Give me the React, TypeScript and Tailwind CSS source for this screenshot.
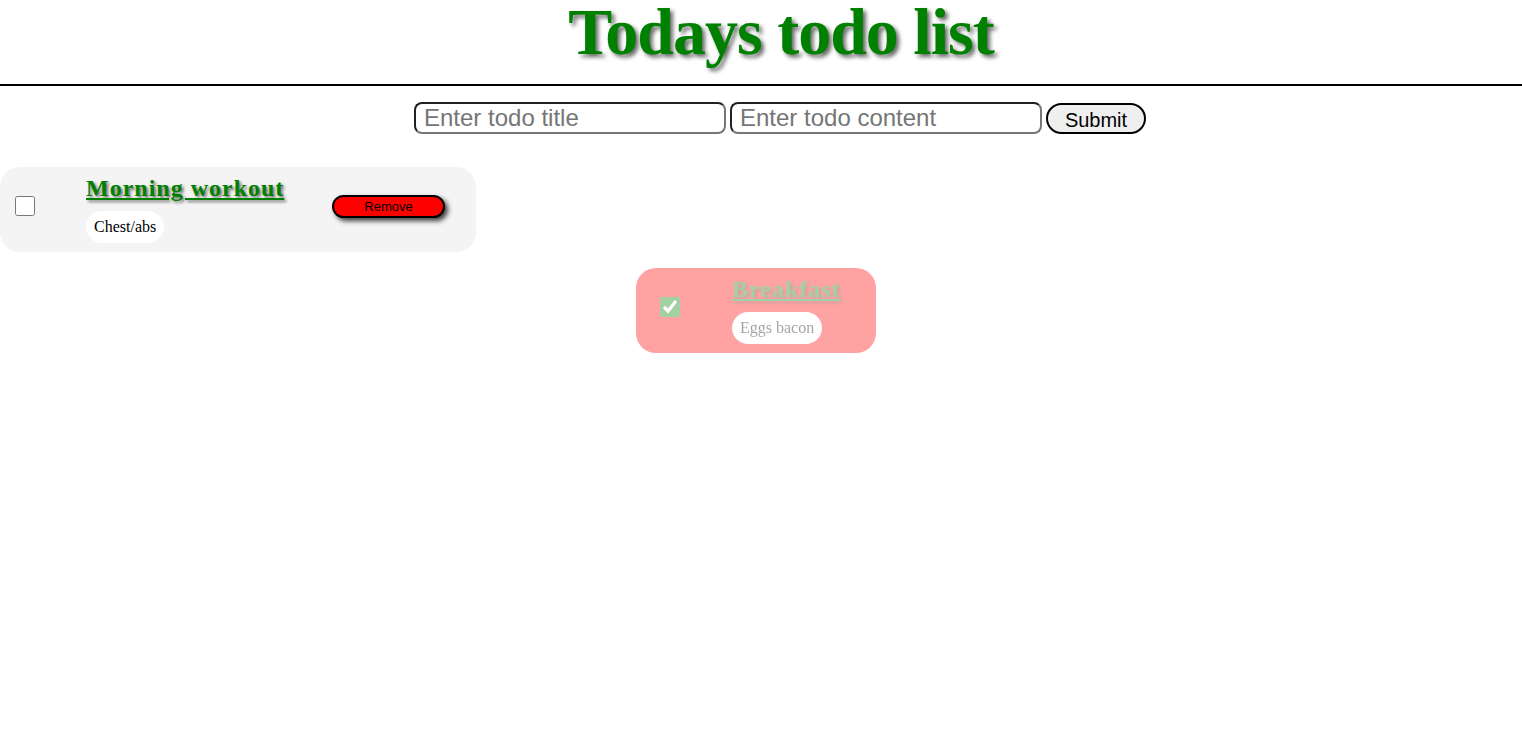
import React, { useState } from 'react'

interface Todo {
    id: number;
    title: string;
    content: string;
    done: boolean;
}

const TodoCard: React.FC<{ todo: Todo; onToggle: () => void; onRemove: () => void }> = ({ todo, onToggle, onRemove }) => {
    if (todo.done) {
        return (
            <div className="flex justify-center pr-[10px]">
                <div className="flex items-center w-[240px] h-[85px] pl-[24px] rounded-[20px] bg-[#ff0000] opacity-[0.36]">
                    <input type="checkbox" checked onChange={onToggle} className="w-5 h-5 m-0 mb-[7px] accent-[#008000]" />
                    <div className="flex flex-col items-start ml-[52px]">
                        <h2 className="text-[24px] font-bold tracking-[1px] underline text-[#008000] leading-[24px] [text-shadow:2px_2px_3px_rgba(0,0,0,0.55)]">{todo.title}</h2>
                        <p className="mt-[11px] h-[32px] px-[8px] flex items-center rounded-full bg-white text-black text-[16px]">{todo.content}</p>
                    </div>
                </div>
            </div>
        )
    }

    return (
        <div className="flex items-center w-[476px] h-[85px] pl-[15px] pr-[31px] rounded-[20px] bg-[#f4f4f4]">
            <input type="checkbox" checked={false} onChange={onToggle} className="w-5 h-5 m-0 mb-[7px]" />
            <div className="flex flex-col items-start ml-[51px]">
                <h2 className="text-[24px] font-bold tracking-[1px] underline text-[#008000] leading-[24px] [text-shadow:2px_2px_3px_rgba(0,0,0,0.55)]">{todo.title}</h2>
                <p className="mt-[11px] h-[32px] px-[8px] flex items-center rounded-full bg-white text-black text-[16px]">{todo.content}</p>
            </div>
            <button
                onClick={onRemove}
                className="ml-auto mb-[7px] w-[113px] h-[23px] rounded-full border-2 border-black bg-[#ff0000] text-[13px] text-black font-['Liberation_Sans',Arial,sans-serif] shadow-[3px_3px_5px_rgba(0,0,0,0.75)]"
            >
                Remove
            </button>
        </div>
    )
}

export default function App() {
    const [todos, setTodos] = useState<Todo[]>([
        { id: 1, title: 'Morning workout', content: 'Chest/abs', done: false },
        { id: 2, title: 'Breakfast', content: 'Eggs bacon', done: true },
    ]);
    const [title, setTitle] = useState('');
    const [content, setContent] = useState('');

    const toggle = (id: number) => setTodos(prev => prev.map(t => t.id === id ? { ...t, done: !t.done } : t));
    const remove = (id: number) => setTodos(prev => prev.filter(t => t.id !== id));

    const submit = (e: React.FormEvent) => {
        e.preventDefault();
        if (!title) return;
        setTodos(prev => [...prev, { id: Date.now(), title, content, done: false }]);
        setTitle('');
        setContent('');
    };

    return (
        <div className="min-h-screen bg-white font-['Liberation_Serif','Times_New_Roman',serif]">
            <h1 className="text-center pl-[40px] text-[66px] font-bold tracking-[-1px] leading-[64px] text-[#008000] [text-shadow:3px_3px_4px_rgba(0,0,0,0.6)]">
                Todays todo list
            </h1>
            <hr className="mt-[20px] border-0 h-[2px] bg-black" />

            <form onSubmit={submit} className="flex justify-center items-center gap-[4px] pl-[38px] mt-[16px] font-['Liberation_Sans',Arial,sans-serif]">
                <input
                    value={title}
                    onChange={e => setTitle(e.target.value)}
                    placeholder="Enter todo title"
                    className="w-[312px] h-[32px] px-[8px] text-[24px] rounded-[8px] border-2 [border-style:inset] border-[#767676] placeholder:text-[#757575] outline-none"
                />
                <input
                    value={content}
                    onChange={e => setContent(e.target.value)}
                    placeholder="Enter todo content"
                    className="w-[312px] h-[32px] px-[8px] text-[24px] rounded-[8px] border-2 [border-style:inset] border-[#767676] placeholder:text-[#757575] outline-none"
                />
                <button type="submit" className="w-[100px] h-[31px] pb-[2px] rounded-full border-2 border-black bg-[#efefef] text-[20px] text-black">
                    Submit
                </button>
            </form>

            <div className="flex flex-col gap-[16px] mt-[33px]">
                {todos.map(t => (
                    <TodoCard key={t.id} todo={t} onToggle={() => toggle(t.id)} onRemove={() => remove(t.id)} />
                ))}
            </div>
        </div>
    )
}
